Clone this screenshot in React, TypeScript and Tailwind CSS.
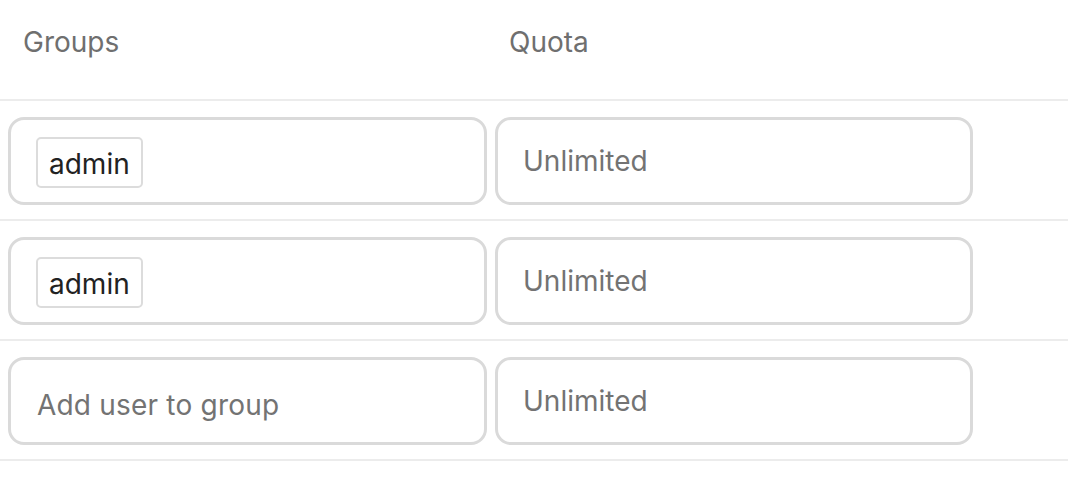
import React from 'react'

type Row = { groups: string[]; quota: string }

const rows: Row[] = [
  { groups: ['admin'], quota: 'Unlimited' },
  { groups: ['admin'], quota: 'Unlimited' },
  { groups: [], quota: 'Unlimited' },
]

function GroupField({ groups }: { groups: string[] }) {
  return (
    <div className="w-[479px] h-[88px] border-[3px] border-[#dadada] rounded-[16px] flex items-center pl-[25px] gap-2">
      {groups.length > 0 ? (
        groups.map((g) => (
          <span
            key={g}
            className="h-[51px] mt-[3px] flex items-center px-[11px] border-2 border-[#dcdcdc] rounded-[5px] text-[28px] text-[#222222] pt-[2px]"
          >
            {g}
          </span>
        ))
      ) : (
        <span className="text-[28px] text-[#737373] pl-[1px] pt-[8px] tracking-[0.2px]">Add user to group</span>
      )}
    </div>
  )
}

function QuotaField({ quota }: { quota: string }) {
  return (
    <div className="w-[478px] h-[88px] border-[3px] border-[#dadada] rounded-[16px] flex items-center pl-[25px]">
      <span className="text-[28px] text-[#737373] pb-[1px]">{quota}</span>
    </div>
  )
}

export default function App() {
  return (
    <div className="w-full min-h-screen bg-white font-['Inter',sans-serif]">
      {/* header */}
      <div className="h-[101px] border-b-2 border-[#ececec] flex items-center text-[28px] text-[#6f6f6f] pb-[16px]">
        <div className="w-[487px] pl-[23px]">Groups</div>
        <div className="pl-[22px]">Quota</div>
      </div>

      {rows.map((r, i) => (
        <div key={i} className="h-[120px] pt-[2px] border-b-2 border-[#ececec] flex items-center">
          <div className="w-[487px] pl-2">
            <GroupField groups={r.groups} />
          </div>
          <div className="pl-2">
            <QuotaField quota={r.quota} />
          </div>
        </div>
      ))}
    </div>
  )
}
